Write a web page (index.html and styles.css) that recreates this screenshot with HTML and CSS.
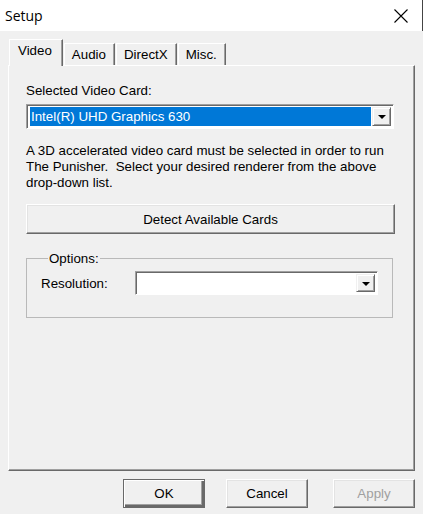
FILE: index.html
```html
<!DOCTYPE html>
<html lang="en">
<head>
  <meta charset="UTF-8" />
  <title>Setup</title>
  <link rel="stylesheet" href="styles.css">
</head>
<body>

<div class="titlebar">
  <span class="title">Setup</span>
  <span class="close">
    <svg width="14" height="14" viewBox="0 0 14 14"><path d="M0.5 0.5 L13.5 13.5 M13.5 0.5 L0.5 13.5" stroke="#000" stroke-width="1.1" fill="none"/></svg>
  </span>
</div>

<div class="dialog">
  <div class="tabs">
    <div class="tab active">Video</div>
    <div class="tab">Audio</div>
    <div class="tab">DirectX</div>
    <div class="tab">Misc.</div>
  </div>

  <div class="panel">
    <div class="field-label">Selected Video Card:</div>
    <div class="combo">
      <div class="combo-value selected">Intel(R) UHD Graphics 630</div>
      <div class="combo-btn"><span class="arrow"></span></div>
    </div>

    <p class="info">A 3D accelerated video card must be selected in order to run The Punisher.&nbsp; Select your desired renderer from the above drop-down list.</p>

    <button class="btn wide">Detect Available Cards</button>

    <fieldset class="group">
      <legend>Options:</legend>
      <div class="row">
        <label>Resolution:</label>
        <div class="combo small">
          <div class="combo-value"></div>
          <div class="combo-btn"><span class="arrow"></span></div>
        </div>
      </div>
    </fieldset>
  </div>

  <div class="actions">
    <button class="btn default">OK</button>
    <button class="btn">Cancel</button>
    <button class="btn" disabled>Apply</button>
  </div>
</div>

</body>
</html>
```

FILE: styles.css
```css
body {
  margin: 0;
  width: 423px;
  height: 514px;
  overflow: hidden;
  background-color: #f0f0f0;
  font-family: "Liberation Sans", Arial, sans-serif;
  font-size: 13.33px;
  color: #000;
}

/* Barra de título */
.titlebar {
  height: 31px;
  background-color: #fff;
  display: flex;
  align-items: center;
  justify-content: space-between;
  padding-left: 5px;
  padding-right: 14px;
  border-right: 1px solid #444;
  box-sizing: border-box;
}
.title {
  font-family: "Open Sans", "Noto Sans", sans-serif;
  font-size: 14px;
  margin-top: -1px;
}
.close {
  display: flex;
  width: 14px;
  height: 14px;
}

.dialog {
  padding: 9px 8px 0 8px;
}

/* Abas */
.tabs {
  display: flex;
  align-items: flex-end;
  height: 25px;
  padding-left: 1px;
  position: relative;
  z-index: 1;
}
.tab {
  height: 22px;
  line-height: 21px;
  padding: 0 8px 0 7px;
  box-sizing: border-box;
  border: 1px solid #fff;
  border-right-color: #696969;
  border-bottom: none;
  box-shadow: inset -1px 0 #a0a0a0;
  background-color: #f0f0f0;
  margin-right: 1px;
}
.tab.active {
  height: 27px;
  margin-bottom: -1px;
  padding: 0 10px 0 8px;
  line-height: 22px;
}

/* Painel */
.panel {
  height: 406px;
  width: 407px;
  box-sizing: border-box;
  border: 1px solid;
  border-color: #fff #696969 #696969 #fff;
  box-shadow: inset -1px -1px #a0a0a0;
  padding: 17px 0 0 17px;
}
.field-label {
  line-height: 15px;
}

.combo {
  display: flex;
  margin-top: 6px;
  width: 368px;
  height: 25px;
  box-sizing: border-box;
  border: 1px solid;
  border-color: #a0a0a0 #fff #fff #a0a0a0;
  box-shadow: inset 1px 1px #696969;
  padding: 2px 2px 2px 3px;
  background-color: #fff;
}
.combo-value {
  flex: 1;
  line-height: 19px;
  padding-left: 1px;
}
.combo-value.selected {
  background-color: #0078d7;
  color: #fff;
}
.combo-btn {
  width: 19px;
  margin-left: 1px;
  box-sizing: border-box;
  background-color: #f0f0f0;
  border: 1px solid;
  border-color: #f0f0f0 #696969 #696969 #f0f0f0;
  box-shadow: inset 1px 1px #fff, inset -1px -1px #a0a0a0;
  display: flex;
  align-items: center;
  justify-content: center;
}
.arrow {
  width: 0;
  height: 0;
  border-left: 4px solid transparent;
  border-right: 4px solid transparent;
  border-top: 4px solid #000;
  margin-top: 1px;
}

.info {
  margin: 14px 0 0 0;
  line-height: 16px;
  width: 372px;
}

.btn {
  font-family: "Liberation Sans", Arial, sans-serif;
  font-size: 13.33px;
  color: #000;
  background-color: #f0f0f0;
  border: 1px solid;
  border-color: #fff #696969 #696969 #fff;
  box-shadow: inset -1px -1px #a0a0a0, inset 1px 1px #e3e3e3;
  padding: 0;
  height: 29px;
  width: 82px;
}
.btn.wide {
  display: block;
  width: 369px;
  height: 30px;
  margin-top: 13px;
}
.btn.default {
  border-color: #696969;
  box-shadow: inset 1px 1px #fff, inset -2px -2px #696969, inset -3px -3px #a0a0a0;
}
.btn:disabled {
  color: #a0a0a0;
}

/* Grupo de opções */
.group {
  margin: 18px 0 0 0;
  width: 367px;
  height: 66px;
  box-sizing: border-box;
  border: 1px solid #b9b9b9;
  padding: 0 0 0 14px;
}
.group legend {
  padding: 0 1px;
  margin-left: 7px;
  line-height: 13px;
}
.row {
  display: flex;
  align-items: center;
  margin-top: 6px;
}
.row label {
  width: 94px;
  flex-shrink: 0;
}
.combo.small {
  margin-top: 0;
  width: 243px;
  height: 24px;
  flex-shrink: 0;
}

/* Botões inferiores */
.actions {
  display: flex;
  justify-content: flex-end;
  gap: 21px;
  margin-top: 8px;
}
.actions .btn:nth-child(2) {
  margin-right: 4px;
}
```
